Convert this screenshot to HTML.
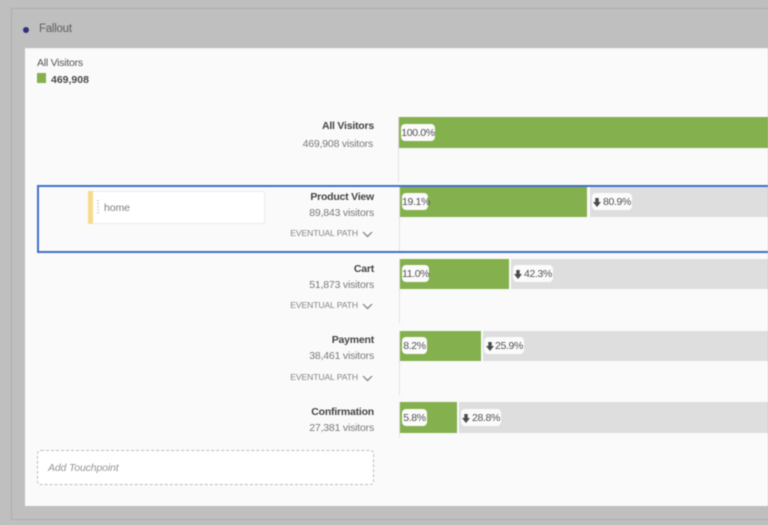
<!DOCTYPE html>
<html><head><meta charset="utf-8">
<style>
html,body{margin:0;padding:0;width:768px;height:525px;overflow:hidden;background:#bfbfbf}
body{position:relative;font-family:"Liberation Sans",sans-serif}
#w{position:absolute;left:0;top:0;width:768px;height:525px;filter:blur(.4px);overflow:hidden}
.a{position:absolute}
.t{position:absolute;white-space:nowrap;line-height:14px}
.r{right:394px;text-align:right}
.n{font-size:10.5px;font-weight:bold;color:#444;letter-spacing:-.22px}
.v{font-size:10.5px;color:#7a7a7a;letter-spacing:-.2px}
.e{font-size:8.6px;color:#858585;right:410px;text-align:right;letter-spacing:-.1px}
.g{position:absolute;background:#84b04e}
.d{position:absolute;background:#dedede;right:0}
.p{position:absolute;background:#fbfbfb;border-radius:4px;height:17px;line-height:19px;font-size:10.5px;letter-spacing:-.35px;color:#505050;white-space:nowrap;text-align:center;box-sizing:border-box}
.q{text-align:right;padding-right:1px;width:40px}
.l{position:absolute;width:1px;background:#e2e2e2}
svg{position:absolute;overflow:visible}
</style></head><body>
<div id="w">
<div class="a" style="left:11px;top:8px;width:770px;height:510px;border:1px solid #aeaeae;box-sizing:content-box"></div>
<div class="a" style="left:23px;top:27px;width:6px;height:6px;border-radius:50%;background:#2d327f"></div>
<div class="t" style="left:39px;top:22px;font-size:11.5px;letter-spacing:-.25px;color:#606060">Fallout</div>
<div class="a" style="left:25px;top:48px;width:760px;height:457px;background:#fafafa;border-top:1px solid #f0f0f0"></div>

<div class="t" style="left:37px;top:55.5px;font-size:10.5px;letter-spacing:-.25px;color:#555">All Visitors</div>
<div class="a" style="left:37px;top:73px;width:9px;height:10px;background:#84b04e"></div>
<div class="t" style="left:51px;top:72.5px;font-size:10.5px;font-weight:bold;color:#4a4a4a">469,908</div>

<div class="a" style="left:37px;top:185px;width:740px;height:68px;box-sizing:border-box;border:2px solid #3f6fc9"></div>

<div class="a" style="left:88px;top:191px;width:177px;height:33px;box-sizing:border-box;background:#fff;border:1px solid #ececec"></div>
<div class="a" style="left:88px;top:191px;width:5px;height:33px;background:#f9d98c"></div>
<div class="a" style="left:97px;top:200px;width:2px;height:15px;background:repeating-linear-gradient(#d8d8d8 0 1.5px,transparent 1.5px 3px)"></div>
<div class="t" style="left:104px;top:201px;font-size:10.5px;letter-spacing:-.1px;color:#7d7d7d">home</div>

<!-- All Visitors -->
<div class="t r n" style="top:119px">All Visitors</div>
<div class="t r v" style="top:136.5px;right:395px">469,908 visitors</div>
<div class="l" style="left:398px;top:117px;height:65px"></div>
<div class="g" style="left:399px;top:117px;right:0;height:31px"></div>
<div class="p" style="left:401px;top:124px;width:34px">100.0%</div>

<!-- Product View -->
<div class="t r n" style="top:190px">Product View</div>
<div class="t r v" style="top:206px">89,843 visitors</div>
<div class="t e" style="top:226px">EVENTUAL PATH</div>
<svg style="left:362px;top:231px" width="11" height="7"><path d="M1 1L5.5 5.5L10 1" fill="none" stroke="#7a7a7a" stroke-width="1.2"/></svg>
<div class="l" style="left:399px;top:187px;height:64px"></div>
<div class="g" style="left:400px;top:187px;width:187px;height:30px"></div>
<div class="d" style="left:590px;top:187px;height:30px"></div>
<div class="p" style="left:402px;top:193px;width:26px">19.1%</div>
<div class="p q" style="left:592px;top:193px">80.9%</div>
<svg style="left:593px;top:198px" width="8" height="9"><path d="M2.3 0H5.7V4H8L4 9L0 4H2.3Z" fill="#4a4a4a"/></svg>

<!-- Cart -->
<div class="t r n" style="top:261.5px">Cart</div>
<div class="t r v" style="top:277.5px">51,873 visitors</div>
<div class="t e" style="top:298px">EVENTUAL PATH</div>
<svg style="left:362px;top:303px" width="11" height="7"><path d="M1 1L5.5 5.5L10 1" fill="none" stroke="#7a7a7a" stroke-width="1.2"/></svg>
<div class="l" style="left:399px;top:259px;height:64px"></div>
<div class="g" style="left:400px;top:259px;width:109px;height:30px"></div>
<div class="d" style="left:511px;top:259px;height:30px"></div>
<div class="p" style="left:402px;top:265px;width:27px">11.0%</div>
<div class="p q" style="left:513px;top:265px">42.3%</div>
<svg style="left:514px;top:270px" width="8" height="9"><path d="M2.3 0H5.7V4H8L4 9L0 4H2.3Z" fill="#4a4a4a"/></svg>

<!-- Payment -->
<div class="t r n" style="top:333px">Payment</div>
<div class="t r v" style="top:349px">38,461 visitors</div>
<div class="t e" style="top:369.5px">EVENTUAL PATH</div>
<svg style="left:362px;top:375px" width="11" height="7"><path d="M1 1L5.5 5.5L10 1" fill="none" stroke="#7a7a7a" stroke-width="1.2"/></svg>
<div class="l" style="left:399px;top:331px;height:64px"></div>
<div class="g" style="left:400px;top:331px;width:80.5px;height:30px"></div>
<div class="d" style="left:483px;top:331px;height:30px"></div>
<div class="p" style="left:402px;top:337px;width:25px">8.2%</div>
<div class="p q" style="left:484px;top:337px">25.9%</div>
<svg style="left:486px;top:342px" width="8" height="9"><path d="M2.3 0H5.7V4H8L4 9L0 4H2.3Z" fill="#4a4a4a"/></svg>

<!-- Confirmation -->
<div class="t r n" style="top:405px">Confirmation</div>
<div class="t r v" style="top:421px">27,381 visitors</div>
<div class="l" style="left:399px;top:402px;height:36px"></div>
<div class="g" style="left:400px;top:402px;width:57px;height:31px"></div>
<div class="d" style="left:459px;top:402px;height:31px"></div>
<div class="p" style="left:402px;top:409px;width:25px">5.8%</div>
<div class="p q" style="left:461px;top:409px">28.8%</div>
<svg style="left:462px;top:414px" width="8" height="9"><path d="M2.3 0H5.7V4H8L4 9L0 4H2.3Z" fill="#4a4a4a"/></svg>

<div class="a" style="left:37px;top:450px;width:337px;height:35px;box-sizing:border-box;background:#fff;border:1px dashed #bcbcbc;border-radius:4px"></div>
<div class="t" style="left:48px;top:461px;font-size:10.5px;font-style:italic;letter-spacing:-.15px;color:#959595">Add Touchpoint</div>
</div>
</body></html>
